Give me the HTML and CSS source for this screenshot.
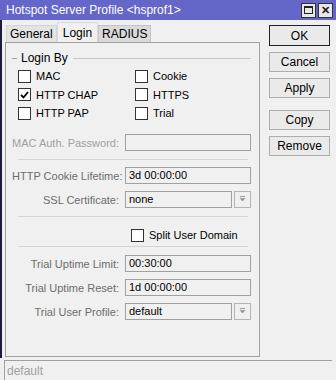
FILE: index.html
```html
<!DOCTYPE html>
<html lang="en">
<head>
    <meta charset="UTF-8">
    <title>Hotspot Server Profile</title>
    <link rel="stylesheet" href="styles.css">
</head>
<body>
    <div class="window">
        <div class="titlebar">
            <span class="title">Hotspot Server Profile &lt;hsprof1&gt;</span>
            <div class="title-buttons">
                <span class="tbtn"><span class="max-box"></span></span>
                <span class="tbtn close">&#10005;</span>
            </div>
        </div>

        <div class="content">
            <div class="left">
                <div class="tabs">
                    <span class="tab">General</span>
                    <span class="tab active">Login</span>
                    <span class="tab">RADIUS</span>
                </div>

                <div class="panel">
                    <div class="group-title"><span class="dash"></span><span>Login By</span><span class="rule"></span></div>
                    <div class="checks">
                        <label class="check"><span class="box"></span>MAC</label>
                        <label class="check"><span class="box"></span>Cookie</label>
                        <label class="check"><span class="box checked"><svg width="9" height="8" viewBox="0 0 9 8"><path d="M1 4 L3.5 6.5 L8 1" fill="none" stroke="#000" stroke-width="1.8"/></svg></span>HTTP CHAP</label>
                        <label class="check"><span class="box"></span>HTTPS</label>
                        <label class="check"><span class="box"></span>HTTP PAP</label>
                        <label class="check"><span class="box"></span>Trial</label>
                    </div>

                    <div class="row first">
                        <span class="label disabled">MAC Auth. Password:</span>
                        <span class="field"></span>
                    </div>

                    <div class="sep"></div>

                    <div class="row">
                        <span class="label">HTTP Cookie Lifetime:</span>
                        <span class="field">3d 00:00:00</span>
                    </div>
                    <div class="row">
                        <span class="label">SSL Certificate:</span>
                        <span class="field short">none</span>
                        <span class="drop"><svg width="7" height="7" viewBox="0 0 7 7"><path d="M1 0.5 H6" stroke="#9a9a9a" stroke-width="1"/><path d="M0.5 2 H6.5 L3.5 5.5 Z" fill="#9a9a9a"/></svg></span>
                    </div>

                    <div class="sep"></div>

                    <label class="check split"><span class="box"></span>Split User Domain</label>

                    <div class="sep tight"></div>

                    <div class="row trial">
                        <span class="label">Trial Uptime Limit:</span>
                        <span class="field">00:30:00</span>
                    </div>
                    <div class="row">
                        <span class="label">Trial Uptime Reset:</span>
                        <span class="field">1d 00:00:00</span>
                    </div>
                    <div class="row">
                        <span class="label">Trial User Profile:</span>
                        <span class="field short">default</span>
                        <span class="drop"><svg width="7" height="7" viewBox="0 0 7 7"><path d="M1 0.5 H6" stroke="#9a9a9a" stroke-width="1"/><path d="M0.5 2 H6.5 L3.5 5.5 Z" fill="#9a9a9a"/></svg></span>
                    </div>
                </div>
            </div>

            <div class="side">
                <button class="btn default">OK</button>
                <button class="btn">Cancel</button>
                <button class="btn">Apply</button>
                <button class="btn gap">Copy</button>
                <button class="btn">Remove</button>
            </div>
        </div>

        <div class="status">default</div>
    </div>
</body>
</html>
```

FILE: styles.css
```css
body {
    margin: 0;
    padding: 0;
    background: #f0f0f0;
    font-family: 'Liberation Sans', Arial, sans-serif;
    font-size: 11px;
    color: #000;
    overflow: hidden;
}

.window {
    width: 336px;
    height: 380px;
    display: flex;
    flex-direction: column;
    background: #f0f0f0;
}

.titlebar {
    height: 20px;
    background: #6466c8;
    display: flex;
    align-items: center;
    justify-content: space-between;
    padding: 0 3px 0 6px;
}

.title {
    color: #fff;
    font-size: 12px;
}

.title-buttons {
    display: flex;
    gap: 2px;
}

.tbtn {
    width: 15px;
    height: 15px;
    box-sizing: border-box;
    border: 1px solid #333;
    background: #e8e8e8;
    display: flex;
    align-items: center;
    justify-content: center;
    font-size: 11px;
    font-weight: bold;
    color: #222;
}

.max-box {
    width: 9px;
    height: 8px;
    box-sizing: border-box;
    border: 1px solid #222;
    border-top-width: 2px;
}

.content {
    flex: 1;
    display: flex;
    border-left: 2px solid #1c1c3a;
    padding: 3px 0 0 3px;
}

.left {
    width: 255px;
    display: flex;
    flex-direction: column;
}

.tabs {
    display: flex;
    height: 19px;
    align-items: flex-end;
    padding-left: 1px;
}

.tab {
    height: 17px;
    padding: 0 3px;
    box-sizing: border-box;
    display: flex;
    align-items: center;
    background: #e4e4e4;
    border: 1px solid #d4d4d4;
    border-bottom: none;
    font-size: 12px;
}

.tab.active {
    height: 20px;
    background: #f0f0f0;
    border-color: #d9d9d9;
    padding: 0 5px;
}

.tab:last-child {
    background: #dadada;
    border-color: #c4c4c4;
}

.panel {
    height: 315px;
    box-sizing: border-box;
    border: 1px solid #a0a0a0;
    padding: 8px 8px 0 6px;
}

.group-title {
    display: flex;
    align-items: center;
    color: #000;
    font-size: 12px;
    height: 14px;
}

.group-title .dash {
    width: 5px;
    height: 1px;
    background: #a0a0a0;
    margin-right: 4px;
}

.group-title .rule {
    flex: 1;
    height: 1px;
    background: #c8c8c8;
    margin-left: 5px;
}

.checks {
    display: grid;
    grid-template-columns: 117px 1fr;
    row-gap: 4.5px;
    padding: 4px 0 0 6px;
}

.check {
    display: flex;
    align-items: center;
    font-size: 11px;
    height: 14px;
    white-space: nowrap;
}

.box {
    width: 13px;
    height: 13px;
    box-sizing: border-box;
    border: 1px solid #333;
    background: #fff;
    margin-right: 5px;
    display: flex;
    align-items: center;
    justify-content: center;
}

.row {
    display: flex;
    align-items: center;
    margin-top: 7px;
}

.row.first {
    margin-top: 14px;
}

.row.trial {
    margin-top: 8px;
}

.label {
    width: 107px;
    text-align: right;
    color: #6d6d6d;
    font-size: 11px;
    margin-right: 6px;
    white-space: nowrap;
}

.label.disabled {
    color: #a0a0a0;
}

.field {
    width: 126px;
    height: 17px;
    box-sizing: border-box;
    border: 1px solid #a0a0a0;
    background: #f0f0f0;
    padding-left: 3px;
    font-size: 11px;
    line-height: 15px;
}

.field.short {
    width: 107px;
}

.drop {
    width: 17px;
    height: 17px;
    box-sizing: border-box;
    border: 1px solid #b4b4b4;
    margin-left: 2px;
    display: flex;
    align-items: center;
    justify-content: center;
}

.sep {
    height: 1px;
    background: #d4d4d4;
    margin: 8px 3px 0 6px;
}

.sep.tight {
    margin-top: 4px;
}

.split {
    margin: 11px 0 0 119px;
}

.side {
    display: flex;
    flex-direction: column;
    padding: 2px 0 0 9px;
    gap: 6px;
}

.btn {
    width: 61px;
    height: 20px;
    font-family: 'Liberation Sans', Arial, sans-serif;
    font-size: 12px;
    background: #eaeaea;
    border: 1px solid #adadad;
    padding: 0;
    color: #000;
}

.btn.default {
    border: 1px solid #222;
    height: 21px;
}

.btn.gap {
    margin-top: 6px;
}

.status {
    height: 20px;
    margin: 2px 4px 0 4px;
    box-sizing: border-box;
    border-top: 1px solid #a0a0a0;
    border-left: 1px solid #a0a0a0;
    color: #a0a0a0;
    font-size: 12px;
    padding: 3px 0 0 2px;
}
```
